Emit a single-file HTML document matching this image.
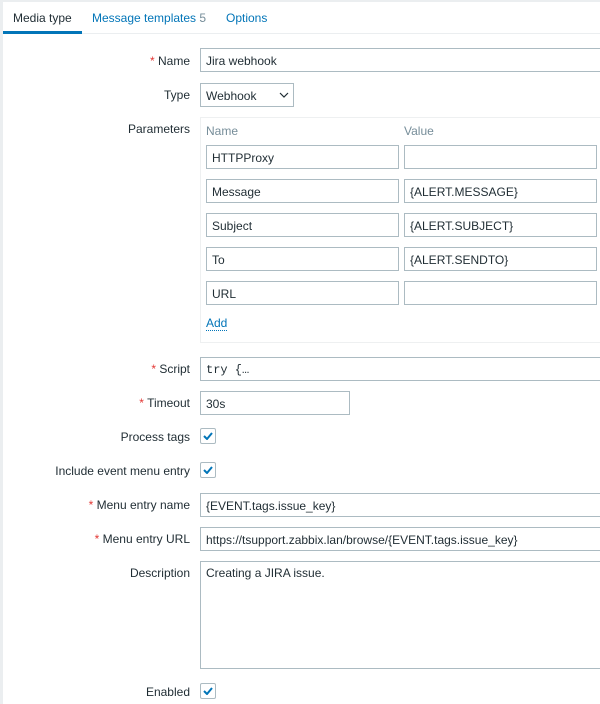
<!DOCTYPE html>
<html><head><meta charset="utf-8"><style>
*{box-sizing:border-box;margin:0;padding:0}
body{width:600px;height:704px;overflow:hidden;background:#fff;font-family:"Liberation Sans",Arial,sans-serif;font-size:12px;color:#1f2c33;position:relative}
.strip{position:absolute;left:0;top:0;width:3px;height:704px;background:#ebeef0}
.topb{position:absolute;left:0;top:0;width:600px;height:2px;background:#ebeef0}
.tabs{position:absolute;left:3px;top:2px;right:0;height:32px;border-bottom:1px solid #ebeef0}
.tab{position:absolute;top:9px;font-size:12px}
.act{position:absolute;left:0;top:29px;width:79px;height:3px;background:#0275b8}
.lbl{position:absolute;right:410px;text-align:right;white-space:nowrap}
.req{color:#e33734}
.in{position:absolute;height:24px;border:1px solid #acbbc2;background:#fff;padding:1px 5px 0;line-height:22px;white-space:nowrap;overflow:hidden}
.cb{position:absolute;left:200px;width:16px;height:16px;border:1px solid #acbbc2;border-radius:2px;background:#fff}
.cb svg{position:absolute;left:2px;top:3px}
.pbox{position:absolute;left:200px;top:117px;width:410px;height:226px;border:1px solid #eef0f1;background:#fff}
.ph{position:absolute;top:124px;color:#768d99}
a{color:#0275b8;text-decoration:none}
</style></head><body>
<div class="strip"></div><div class="topb"></div>
<div class="tabs">
<span class="tab" style="left:10px">Media type</span>
<span class="tab" style="left:89px;color:#0275b8">Message templates <span style="color:#768d99">5</span></span>
<span class="tab" style="left:223px;color:#0275b8">Options</span>
<div class="act"></div>
</div>

<div class="lbl" style="top:54px"><span class="req">*</span> Name</div>
<div class="in" style="left:200px;top:48px;width:410px">Jira webhook</div>

<div class="lbl" style="top:88px">Type</div>
<div class="in" style="left:200px;top:83px;width:94px">Webhook<svg style="position:absolute;right:4px;top:8px" width="10" height="6" viewBox="0 0 10 6"><path d="M1 1l4 4 4-4" fill="none" stroke="#1f2c33" stroke-width="1.2"/></svg></div>

<div class="lbl" style="top:122px">Parameters</div>
<div class="pbox"></div>
<div class="ph" style="left:206px">Name</div>
<div class="ph" style="left:404px">Value</div>
<div class="in" style="left:206px;top:145px;width:193px">HTTPProxy</div><div class="in" style="left:404px;top:145px;width:193px"></div>
<div class="in" style="left:206px;top:179px;width:193px">Message</div><div class="in" style="left:404px;top:179px;width:193px">{ALERT.MESSAGE}</div>
<div class="in" style="left:206px;top:213px;width:193px">Subject</div><div class="in" style="left:404px;top:213px;width:193px">{ALERT.SUBJECT}</div>
<div class="in" style="left:206px;top:247px;width:193px">To</div><div class="in" style="left:404px;top:247px;width:193px">{ALERT.SENDTO}</div>
<div class="in" style="left:206px;top:281px;width:193px">URL</div><div class="in" style="left:404px;top:281px;width:193px"></div>
<a style="position:absolute;left:206px;top:316px;border-bottom:1px dotted #0275b8;line-height:14px">Add</a>

<div class="lbl" style="top:362px"><span class="req">*</span> Script</div>
<div class="in" style="left:200px;top:357px;width:410px;font-family:'Liberation Mono',monospace">try {…</div>

<div class="lbl" style="top:396px"><span class="req">*</span> Timeout</div>
<div class="in" style="left:200px;top:391px;width:150px">30s</div>

<div class="lbl" style="top:430px">Process tags</div>
<div class="cb" style="top:428px"><svg width="10" height="8" viewBox="0 0 10 8"><path d="M1 4l3 3 5-6" fill="none" stroke="#0275b8" stroke-width="2"/></svg></div>

<div class="lbl" style="top:464px">Include event menu entry</div>
<div class="cb" style="top:462px"><svg width="10" height="8" viewBox="0 0 10 8"><path d="M1 4l3 3 5-6" fill="none" stroke="#0275b8" stroke-width="2"/></svg></div>

<div class="lbl" style="top:498px"><span class="req">*</span> Menu entry name</div>
<div class="in" style="left:200px;top:493px;width:410px">{EVENT.tags.issue_key}</div>

<div class="lbl" style="top:532px"><span class="req">*</span> Menu entry URL</div>
<div class="in" style="left:200px;top:527px;width:410px">https://tsupport.zabbix.lan/browse/{EVENT.tags.issue_key}</div>

<div class="lbl" style="top:566px">Description</div>
<div class="in" style="left:200px;top:561px;width:410px;height:108px;line-height:14px;padding-top:4px">Creating a JIRA issue.</div>

<div class="lbl" style="top:685px">Enabled</div>
<div class="cb" style="top:683px"><svg width="10" height="8" viewBox="0 0 10 8"><path d="M1 4l3 3 5-6" fill="none" stroke="#0275b8" stroke-width="2"/></svg></div>
</body></html>
